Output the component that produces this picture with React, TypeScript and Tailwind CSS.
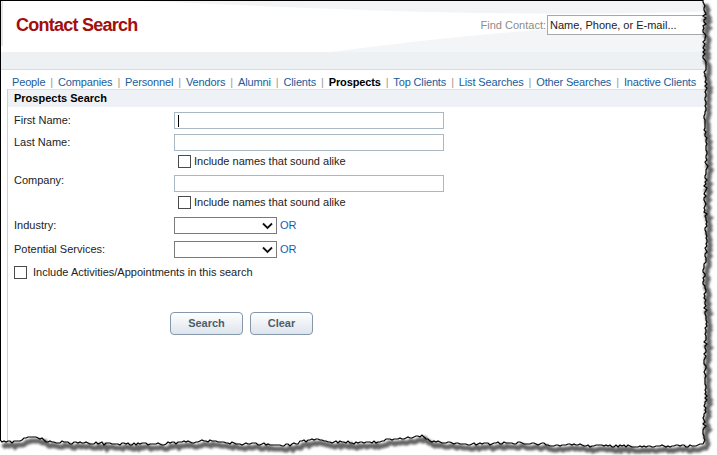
import React from "react";

function rng(seed: number) {
  let s = seed;
  return () => {
    s = (s * 1103515245 + 12345) % 2147483648;
    return s / 2147483648;
  };
}

function interp(keys: [number, number][], t: number) {
  for (let i = 0; i < keys.length - 1; i++) {
    const [a, av] = keys[i];
    const [b, bv] = keys[i + 1];
    if (t >= a && t <= b) {
      const f = (t - a) / (b - a || 1);
      return av + (bv - av) * f;
    }
  }
  return keys[keys.length - 1][1];
}

function TornEdge() {
  const r = rng(7);
  const pts: [number, number][] = [];
  const rightKeys: [number, number][] = [
    [0, 703], [20, 705], [50, 704], [80, 706], [120, 705], [160, 707], [200, 705],
    [240, 706], [280, 704], [320, 706], [360, 705], [400, 706], [430, 704], [445, 703],
  ];
  for (let y = 0; y <= 444; y += 2) {
    const base = interp(rightKeys, y);
    pts.push([Math.round(base + (r() - 0.5) * 3), y]);
  }
  const bottomKeys: [number, number][] = [
    [0, 441], [12, 442], [22, 439], [32, 437], [40, 438], [46, 442], [80, 443],
    [150, 444], [200, 442], [212, 440], [225, 443], [290, 445], [305, 441], [315, 440],
    [330, 442], [365, 443], [380, 441], [400, 439], [423, 436], [430, 441], [470, 444],
    [520, 443], [560, 445], [620, 446], [690, 446], [703, 445],
  ];
  for (let x = 700; x >= 0; x -= 2) {
    const base = interp(bottomKeys, x);
    pts.push([x, Math.round(base + (r() - 0.5) * 2.5)]);
  }
  const line = pts.map((p) => p.join(",")).join(" ");
  const outside = `${line} 0,455 717,455 717,0`;
  const shadow = pts.map(([x, y]) => `${x + 3},${y + 4}`).join(" ");
  return (
    <svg className="absolute inset-0 pointer-events-none" width="717" height="455" viewBox="0 0 717 455">
      <defs>
        <filter id="blur" x="-10%" y="-10%" width="120%" height="120%">
          <feGaussianBlur stdDeviation="1.3" />
        </filter>
      </defs>
      <polygon points={outside} fill="#ffffff" />
      <polyline points={shadow} fill="none" stroke="#666" strokeWidth="5" filter="url(#blur)" />
      <polyline points={line} fill="none" stroke="#000" strokeWidth="1.2" />
    </svg>
  );
}

function Checkbox() {
  return <span className="inline-block w-[13px] h-[13px] border border-[#4a4a4a] bg-white shrink-0" />;
}

function Select() {
  return (
    <div className="relative w-[103px] h-[17px] border border-[#7a7a7a] bg-white">
      <svg className="absolute right-[3px] top-[4px]" width="11" height="8" viewBox="0 0 11 8">
        <polyline points="1,1.5 5.5,6 10,1.5" fill="none" stroke="#111" strokeWidth="1.8" />
      </svg>
    </div>
  );
}

const tabs = [
  "People",
  "Companies",
  "Personnel",
  "Vendors",
  "Alumni",
  "Clients",
  "Prospects",
  "Top Clients",
  "List Searches",
  "Other Searches",
  "Inactive Clients",
];

export default function App() {
  return (
    <div className="relative w-[717px] h-[455px] overflow-hidden bg-white text-[11px] leading-[13px] text-[#222] font-['Liberation_Sans',Arial,sans-serif]">
      <div className="flex flex-col h-full border-l border-t border-black">
        {/* header */}
        <div className="relative h-[51px] flex justify-between">
          <svg className="absolute inset-0" width="717" height="51" viewBox="0 0 717 51" preserveAspectRatio="none">
            <path d="M140,0 C300,6 500,18 717,10 L717,0 Z" fill="#f2f4f6" />
            <path d="M330,51 C450,35 600,22 717,18 L717,51 Z" fill="#f3f5f7" />
            <line x1="1" y1="0" x2="1" y2="45" stroke="#c9d0d6" />
          </svg>
          <div className="relative pl-[15px] pt-[13px] text-[18px] leading-[22px] font-bold tracking-[-0.75px] text-[#a30e0e]">
            Contact Search
          </div>
          <div className="relative flex items-center gap-[1px] pt-[14px] self-start">
            <span className="text-[#8c8c8c] text-[11px]">Find Contact:</span>
            <div className="w-[170px] h-[20px] border border-[#a8a8a8] bg-white flex items-center pl-[2px] text-[#222]">
              Name, Phone, or E-mail...
            </div>
          </div>
        </div>
        {/* band */}
        <div className="h-[18px] bg-[#eef1f4] border-b border-[#d5dde4]" />
        {/* tabs */}
        <div className="h-[19px] pt-[6px] pl-[11px] flex items-start whitespace-nowrap tracking-[-0.15px]">
          {tabs.map((t, i) => (
            <React.Fragment key={t}>
              {i > 0 && <span className="text-[#9a9a9a] mx-[5px]">|</span>}
              <span className={t === "Prospects" ? "font-bold text-black" : "text-[#1b5c9a]"}>{t}</span>
            </React.Fragment>
          ))}
        </div>
        {/* body */}
        <div className="flex-1 ml-[6px] border-l border-[#c9d2da] flex flex-col">
          <div className="h-[18px] bg-[#eef2f6] border-t border-[#dbe2e9] pl-[6px] pt-[2px] font-bold text-black">
            Prospects Search
          </div>
          <div className="flex flex-col">
            <div className="mt-[5px] flex items-center">
              <div className="w-[166px] pl-[6px]">First Name:</div>
              <div className="w-[270px] h-[17px] border border-[#a9b8c2] bg-white flex items-center pl-[3px]">
                <span className="w-[1px] h-[12px] bg-black" />
              </div>
            </div>
            <div className="mt-[5px] flex items-center">
              <div className="w-[166px] pl-[6px]">Last Name:</div>
              <div className="w-[270px] h-[17px] border border-[#a9b8c2] bg-white" />
            </div>
            <div className="mt-[4px] flex items-center pl-[170px] gap-[3px]">
              <Checkbox />
              <span>Include names that sound alike</span>
            </div>
            <div className="mt-[7px] flex items-start">
              <div className="w-[166px] pl-[6px] mt-[-1px]">Company:</div>
              <div className="w-[270px] h-[17px] border border-[#a9b8c2] bg-white" />
            </div>
            <div className="mt-[4px] flex items-center pl-[170px] gap-[3px]">
              <Checkbox />
              <span>Include names that sound alike</span>
            </div>
            <div className="mt-[8px] flex items-center">
              <div className="w-[166px] pl-[6px]">Industry:</div>
              <Select />
              <span className="ml-[3px] text-[#0b62b8]">OR</span>
            </div>
            <div className="mt-[7px] flex items-center">
              <div className="w-[166px] pl-[6px]">Potential Services:</div>
              <Select />
              <span className="ml-[3px] text-[#0b62b8]">OR</span>
            </div>
            <div className="mt-[8px] flex items-center pl-[6px] gap-[6px]">
              <Checkbox />
              <span>Include Activities/Appointments in this search</span>
            </div>
            <div className="mt-[33px] flex pl-[162px] gap-[7px]">
              <button className="w-[73px] h-[23px] rounded-[4px] border border-[#8597a9] bg-gradient-to-b from-[#ffffff] to-[#dde4ec] font-bold text-[#4f5d6b] text-[11px]">
                Search
              </button>
              <button className="w-[63px] h-[23px] rounded-[4px] border border-[#8597a9] bg-gradient-to-b from-[#ffffff] to-[#dde4ec] font-bold text-[#4f5d6b] text-[11px]">
                Clear
              </button>
            </div>
          </div>
        </div>
      </div>
      <TornEdge />
    </div>
  );
}
